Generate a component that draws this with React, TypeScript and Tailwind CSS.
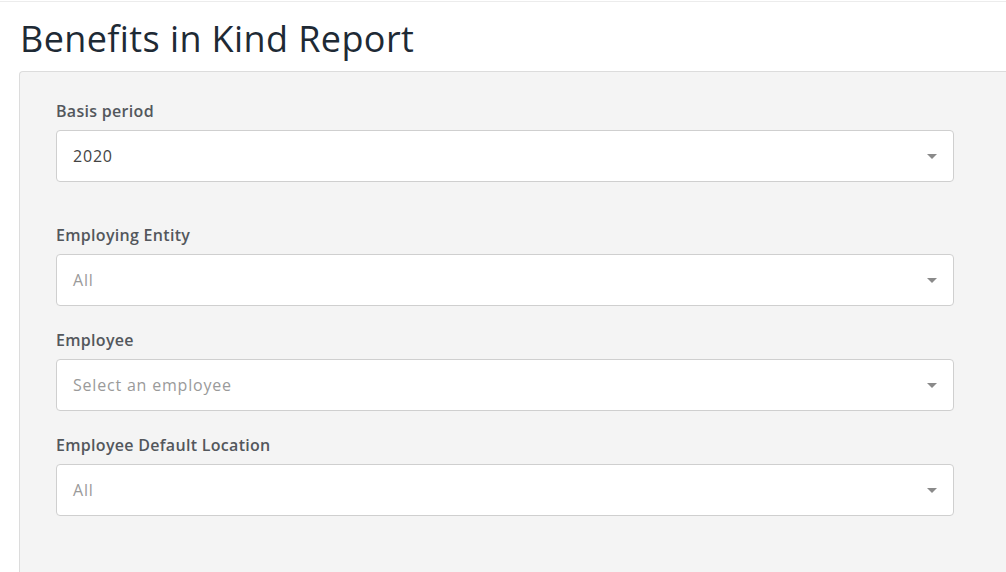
const FIELDS = [
  { label: 'Basis period', value: '2020', placeholder: false, extra: true },
  { label: 'Employing Entity', value: 'All', placeholder: true, extra: false },
  { label: 'Employee', value: 'Select an employee', placeholder: true, extra: false },
  { label: 'Employee Default Location', value: 'All', placeholder: true, extra: false },
]

function Caret() {
  return (
    <svg width="10" height="5" viewBox="0 0 10 5" className="shrink-0">
      <path d="M0 0 L10 0 L5 5 Z" fill="#8a8a8a" />
    </svg>
  )
}

export default function App() {
  return (
    <div className="min-h-[572px] bg-white overflow-hidden" style={{ fontFamily: '"Open Sans", "Liberation Sans", sans-serif' }}>
      <div className="h-px mt-px bg-[#ececec]" />

      {/* Title */}
      <h1 className="pl-5 pt-[13px] h-[69px] text-[36px] leading-[48px] text-[#1e2a35] tracking-[0.4px]">
        Benefits in Kind Report
      </h1>

      {/* Form panel */}
      <div className="ml-[19px] min-h-[501px] bg-[#f4f4f4] border-l border-t border-[#dcdcdc] rounded-tl pl-9 pr-[52px] pt-[27px]">
        {FIELDS.map((f) => (
          <div key={f.label} className={f.extra ? 'mb-[41px]' : 'mb-[22px]'}>
            <div className="text-[16px] leading-6 font-semibold text-[#53575c] tracking-[0.3px] mb-[7px]">{f.label}</div>
            <div className="h-[52px] bg-white border border-[#cfcfcf] rounded flex items-center justify-between pl-4 pr-4">
              <span className={f.placeholder ? 'text-[16px] tracking-[0.8px] text-[#9a9a9a]' : 'text-[16px] tracking-[0.8px] text-[#444]'}>{f.value}</span>
              <Caret />
            </div>
          </div>
        ))}
      </div>
    </div>
  )
}
